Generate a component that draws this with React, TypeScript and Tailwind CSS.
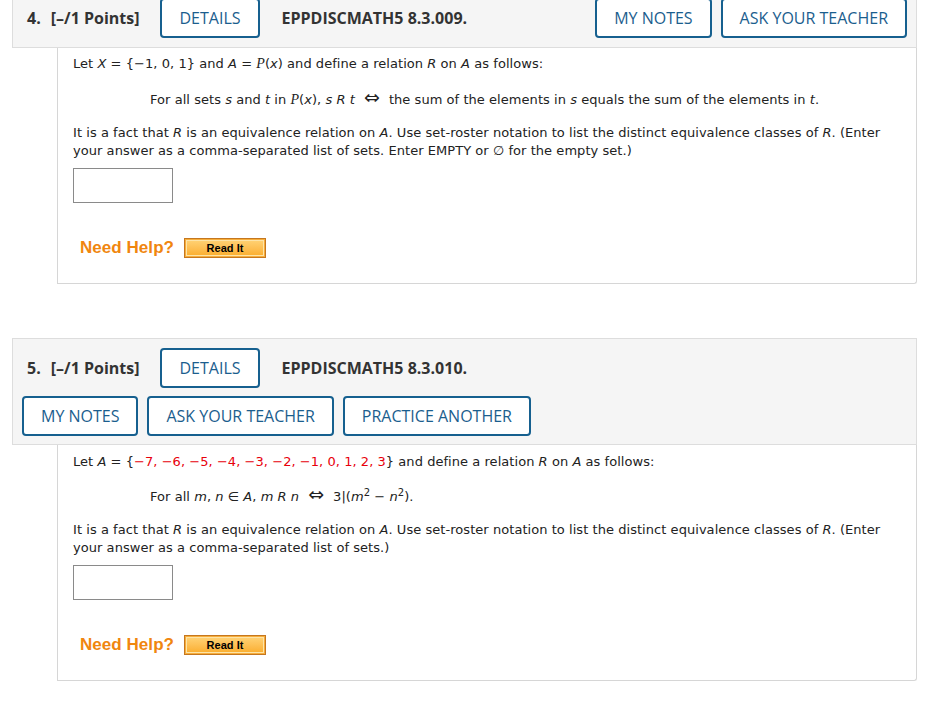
import type { ReactNode } from "react";

const btn =
  "flex h-10 items-center rounded-[4px] border-2 border-[#16608f] bg-white px-[17px] text-[16px] font-medium text-[#1b5e8e] font-['Open_Sans',sans-serif]";

function NavButton({ children }: { children: ReactNode }) {
  return (
    <button type="button" className={btn}>
      {children}
    </button>
  );
}

function Points({ n }: { n: number }) {
  return (
    <div className="flex items-center gap-[10px] text-[16px] font-bold text-[#333]">
      <span>{n}.</span>
      <span>[–/1 Points]</span>
    </div>
  );
}

function Title({ children }: { children: ReactNode }) {
  return <div className="text-[16px] font-bold text-[#333]">{children}</div>;
}

function I({ children }: { children: ReactNode }) {
  return <span className="italic">{children}</span>;
}

function P() {
  return (
    <span className="font-['Liberation_Serif',serif] text-[14px] leading-[0] italic">
      P
    </span>
  );
}

function Iff() {
  return <span className="mx-[9px] text-[19px] leading-[0]">⇔</span>;
}

function Red({ children }: { children: ReactNode }) {
  return <span className="text-[#e8000b]">{children}</span>;
}

function HelpRow() {
  return (
    <div className="mt-[35px] flex h-5 items-center pl-[7px]">
      <span className="font-['Liberation_Sans',sans-serif] text-[17px] font-bold text-[#f0860f]">
        Need Help?
      </span>
      <button
        type="button"
        className="ml-[10px] h-5 w-[82px] border border-[#c5771f] bg-[#f7ad3a] p-px"
      >
        <span className="flex h-full w-full items-center justify-center border border-[#fde4a8] bg-gradient-to-b from-[#ffd070] to-[#fbb031] font-['Liberation_Sans',sans-serif] text-[11px] font-bold leading-none text-black">
          Read It
        </span>
      </button>
    </div>
  );
}

function AnswerBox() {
  return <div className="mt-[8px] h-[35px] w-[100px] border border-[#8a8a8a] bg-white" />;
}

function Body({ children }: { children: ReactNode }) {
  return (
    <div className="ml-[45px] rounded-br-[3px] border-r border-b border-l border-[#d6d6d6] bg-white pt-[7px] pb-[25px] pl-[15px] pr-4 font-['DejaVu_Sans',Verdana,sans-serif] text-[13px] leading-[18px] tracking-[0.05px] text-[#222]">
      {children}
    </div>
  );
}

export default function App() {
  return (
    <div className="min-h-screen bg-white pr-[9px] pl-[12px]">
      {/* question 4 */}
      <section className="-mt-[12px]">
        <div className="flex items-center border border-[#dddddd] bg-[#f5f5f5] py-[9px] pl-[14px] pr-[9px] font-['Open_Sans',sans-serif]">
          <Points n={4} />
          <div className="ml-[21px]">
            <NavButton>DETAILS</NavButton>
          </div>
          <div className="ml-[22px]">
            <Title>EPPDISCMATH5 8.3.009.</Title>
          </div>
          <div className="ml-auto flex gap-[9px]">
            <NavButton>MY NOTES</NavButton>
            <NavButton>ASK YOUR TEACHER</NavButton>
          </div>
        </div>
        <Body>
          <p>
            Let <I>X</I> = {"{"}−1, 0, 1{"}"} and <I>A</I> = <P />(<I>x</I>) and
            define a relation <I>R</I> on <I>A</I> as follows:
          </p>
          <p className="mt-[18px] pl-[77px]">
            For all sets <I>s</I> and <I>t</I> in <P />(<I>x</I>), <I>s</I>{" "}
            <I>R</I> <I>t</I>
            <Iff />
            the sum of the elements in <I>s</I> equals the sum of the elements in{" "}
            <I>t</I>.
          </p>
          <p className="mt-[15px]">
            It is a fact that <I>R</I> is an equivalence relation on <I>A</I>. Use
            set-roster notation to list the distinct equivalence classes of{" "}
            <I>R</I>. (Enter your answer as a comma-separated list of sets. Enter
            EMPTY or ∅ for the empty set.)
          </p>
          <AnswerBox />
          <HelpRow />
        </Body>
      </section>

      {/* question 5 */}
      <section className="mt-[54px]">
        <div className="border border-[#dddddd] bg-[#f5f5f5] pt-[9px] pb-[8px] pl-[9px] pr-[9px] font-['Open_Sans',sans-serif]">
          <div className="flex items-center pl-[5px]">
            <Points n={5} />
            <div className="ml-[21px]">
              <NavButton>DETAILS</NavButton>
            </div>
            <div className="ml-[22px]">
              <Title>EPPDISCMATH5 8.3.010.</Title>
            </div>
          </div>
          <div className="mt-[8px] flex gap-[9px]">
            <NavButton>MY NOTES</NavButton>
            <NavButton>ASK YOUR TEACHER</NavButton>
            <NavButton>PRACTICE ANOTHER</NavButton>
          </div>
        </div>
        <Body>
          <p className="pt-[1px]">
            Let <I>A</I> = {"{"}
            <Red>−7, −6, −5, −4, −3, −2, −1, 0, 1, 2, 3</Red>
            {"}"} and define a relation <I>R</I> on <I>A</I> as follows:
          </p>
          <p className="mt-[17px] pl-[77px]">
            For all <I>m</I>, <I>n</I> ∈ <I>A</I>, <I>m</I> <I>R</I> <I>n</I>
            <Iff />
            3|(<I>m</I>
            <sup className="text-[10px]">2</sup> − <I>n</I>
            <sup className="text-[10px]">2</sup>).
          </p>
          <p className="mt-[15px]">
            It is a fact that <I>R</I> is an equivalence relation on <I>A</I>. Use
            set-roster notation to list the distinct equivalence classes of{" "}
            <I>R</I>. (Enter your answer as a comma-separated list of sets.)
          </p>
          <AnswerBox />
          <HelpRow />
        </Body>
      </section>
    </div>
  );
}
